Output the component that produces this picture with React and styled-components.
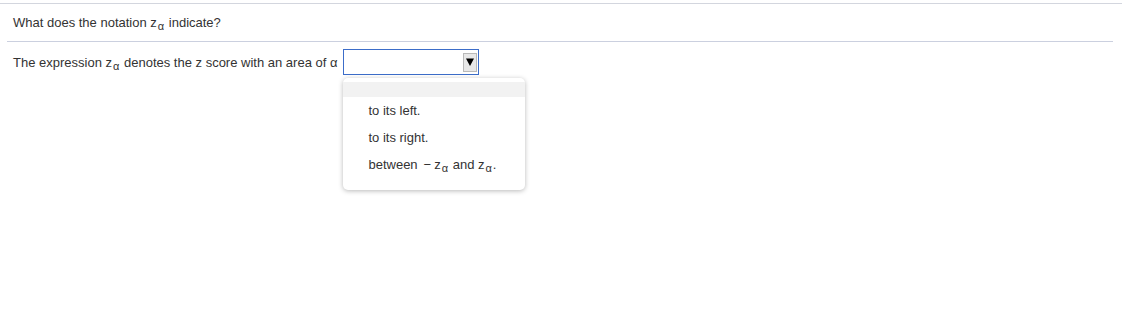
import React from "react";
import styled, { createGlobalStyle } from "styled-components";

const Global = createGlobalStyle`
  html, body { margin: 0; padding: 0; background: #fff; }
  body { font-family: "Liberation Sans", Arial, sans-serif; font-size: 13px; color: #333; }
`;

const Page = styled.div`
  padding-top: 3px;
  min-height: 323px;
  box-sizing: border-box;
`;

const QuestionBar = styled.div`
  border-top: 1px solid #d3d6de;
  height: 38px;
  display: flex;
  align-items: center;
  padding-left: 13px;
  padding-bottom: 1px;
  box-sizing: border-box;
`;

const Divider = styled.div`
  margin: 0 9px 0 7px;
  border-top: 1px solid #cbd0df;
`;

const AnswerRow = styled.div`
  display: flex;
  align-items: center;
  padding-left: 13px;
  margin-top: 7px;
`;

const Z = styled.span`
  white-space: nowrap;
`;

const Sub = styled.sub`
  font-size: 11px;
  vertical-align: -3px;
  line-height: 0;
  margin-left: 1px;
  margin-right: 1px;
`;

const SelectWrap = styled.div`
  position: relative;
  margin-left: 6px;
`;

const SelectBox = styled.div`
  width: 136px;
  height: 26px;
  border: 1px solid #3c6dc9;
  box-sizing: border-box;
  display: flex;
  align-items: center;
  justify-content: flex-end;
  padding-right: 1px;
`;

const ArrowButton = styled.div`
  width: 14px;
  height: 19px;
  box-sizing: border-box;
  background: #e8e8e8;
  border: 1px solid #b9b9b9;
  display: flex;
  align-items: center;
  justify-content: center;
`;

const Menu = styled.div`
  position: absolute;
  top: 29px;
  left: 0;
  width: 182px;
  background: #fff;
  border-radius: 5px;
  box-shadow: 0 1px 5px rgba(0, 0, 0, 0.28);
  padding: 4px 0 12px;
  z-index: 2;
`;

const Option = styled.div`
  height: ${(p) => (p.$empty ? "15px" : "27px")};
  background: ${(p) => (p.$active ? "#f2f2f2" : "#fff")};
  display: flex;
  align-items: center;
  padding-left: 25px;
  white-space: nowrap;
`;

const Minus = styled.span`
  margin-left: 6px;
  margin-right: 3px;
`;

const Za = () => (
  <Z>
    z<Sub>α</Sub>
  </Z>
);

export default function App() {
  return (
    <Page>
      <Global />
      <QuestionBar>
        <span>
          What does the notation <Za /> indicate?
        </span>
      </QuestionBar>
      <Divider />
      <AnswerRow>
        <span>
          The expression <Za /> denotes the z score with an area of α
        </span>
        <SelectWrap>
          <SelectBox>
            <ArrowButton>
              <svg width="8" height="8" viewBox="0 0 8 8">
                <path d="M0 0.5 L8 0.5 L4 8 Z" fill="#000" />
              </svg>
            </ArrowButton>
          </SelectBox>
          <Menu>
            <Option $empty $active />
            <Option>to its left.</Option>
            <Option>to its right.</Option>
            <Option>
              <span>between</span>
              <Minus>−</Minus>
              <Za />
              <span>&nbsp;and&nbsp;</span>
              <Za />
              <span>.</span>
            </Option>
          </Menu>
        </SelectWrap>
      </AnswerRow>
    </Page>
  );
}
